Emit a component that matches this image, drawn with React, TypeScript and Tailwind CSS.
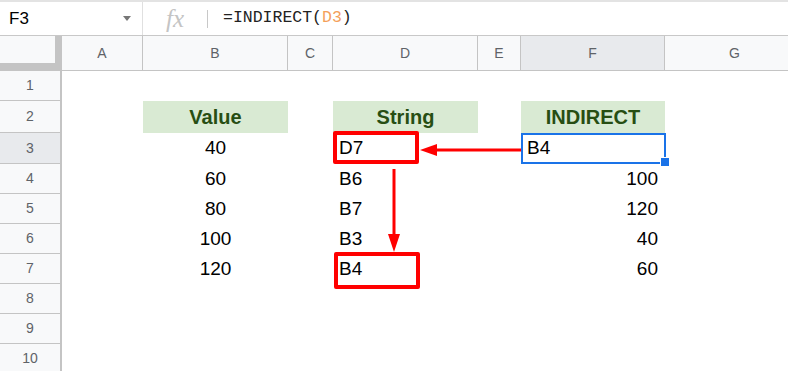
import React from 'react'

// column widths in px, row-number gutter first
const COLS = [
  { key: 'A', w: 81 },
  { key: 'B', w: 145 },
  { key: 'C', w: 45 },
  { key: 'D', w: 145 },
  { key: 'E', w: 43 },
  { key: 'F', w: 144 },
  { key: 'G', w: 140 },
]

const ROW_H = [30, 32, 31, 30, 30, 30, 30, 30, 30, 30]

type Cell = { text: string; align?: 'left' | 'center' | 'right'; head?: boolean }

const DATA: Record<number, Record<string, Cell>> = {
  2: {
    B: { text: 'Value', head: true },
    D: { text: 'String', head: true },
    F: { text: 'INDIRECT', head: true },
  },
  3: { B: { text: '40', align: 'center' }, D: { text: 'D7' }, F: { text: 'B4' } },
  4: { B: { text: '60', align: 'center' }, D: { text: 'B6' }, F: { text: '100', align: 'right' } },
  5: { B: { text: '80', align: 'center' }, D: { text: 'B7' }, F: { text: '120', align: 'right' } },
  6: { B: { text: '100', align: 'center' }, D: { text: 'B3' }, F: { text: '40', align: 'right' } },
  7: { B: { text: '120', align: 'center' }, D: { text: 'B4' }, F: { text: '60', align: 'right' } },
}

const font = { fontFamily: '"Liberation Sans", Arial, sans-serif' }

function FormulaBar() {
  return (
    <div className="flex h-[36px] border-t-2 border-b border-t-[#e3e3e3] border-b-[#c8c8c8] bg-white">
      <div className="flex w-[143px] items-center justify-between border-r border-[#e0e0e0] pl-[9px] pr-[11px]">
        <span className="text-[17px] text-black">F3</span>
        <svg width="8" height="5" viewBox="0 0 8 5">
          <path d="M0 0h8L4 5z" fill="#777" />
        </svg>
      </div>
      <div className="flex w-[64px] items-center justify-center">
        <span
          className="text-[25px] italic leading-none text-[#c4c4c4]"
          style={{ fontFamily: '"Liberation Serif", serif' }}
        >
          fx
        </span>
      </div>
      <div className="my-auto h-[18px] w-px bg-[#c8c8c8]" />
      <div
        className="flex items-center pl-[15px] text-[16.5px] text-[#222]"
        style={{ fontFamily: '"Liberation Mono", "DejaVu Sans Mono", monospace' }}
      >
        =INDIRECT(<span className="text-[#f4a05a]">D3</span>)
      </div>
    </div>
  )
}

function ColumnHeader() {
  return (
    <div className="flex h-[35px] border-b border-[#c4c4c4] bg-[#f8f9fa]">
      <div className="h-[34px] w-[62px] shrink-0 border-r-[7px] border-b-[7px] border-[#c4c4c4] bg-[#f8f9fa]" />
      {COLS.map((c) => (
        <div
          key={c.key}
          style={{ width: c.w }}
          className={`flex shrink-0 items-center justify-center border-r border-[#c4c4c4] text-[14px] text-[#5f6368] ${
            c.key === 'F' ? 'bg-[#e8eaed]' : ''
          }`}
        >
          {c.key}
        </div>
      ))}
    </div>
  )
}

function Row({ n, h }: { n: number; h: number }) {
  const cells = DATA[n] || {}
  return (
    <div className="flex" style={{ height: h }}>
      <div
        className={`flex w-[62px] shrink-0 items-center justify-center border-r-2 border-b border-[#c4c4c4] text-[14px] text-[#5f6368] ${
          n === 3 ? 'bg-[#e8eaed]' : 'bg-[#f8f9fa]'
        }`}
      >
        {n}
      </div>
      {COLS.map((c) => {
        const cell = cells[c.key]
        if (!cell) return <div key={c.key} style={{ width: c.w }} className="shrink-0" />
        if (cell.head) {
          return (
            <div
              key={c.key}
              style={{ width: c.w }}
              className="flex shrink-0 items-center justify-center bg-[#d9ead3] text-[20px] font-bold text-[#274e13]"
            >
              {cell.text}
            </div>
          )
        }
        const justify =
          cell.align === 'center' ? 'justify-center' : cell.align === 'right' ? 'justify-end pr-[7px]' : 'justify-start pl-[6px]'
        return (
          <div
            key={c.key}
            style={{ width: c.w }}
            className={`flex shrink-0 items-center text-[19px] text-black ${justify}`}
          >
            {cell.text}
          </div>
        )
      })}
    </div>
  )
}

export default function App() {
  return (
    <div className="relative h-[371px] w-[788px] overflow-hidden bg-white" style={font}>
      <FormulaBar />
      <ColumnHeader />
      {ROW_H.map((h, i) => (
        <Row key={i} n={i + 1} h={h} />
      ))}

      {/* selected cell F3 */}
      <div className="pointer-events-none absolute left-[521px] top-[133px] h-[31px] w-[145px] border-2 border-[#1a73e8]" />
      <div className="pointer-events-none absolute left-[660px] top-[157px] h-[10px] w-[10px] border border-white bg-[#1a73e8]" />

      {/* red callouts */}
      <div className="pointer-events-none absolute left-[333px] top-[131px] h-[33px] w-[86px] rounded-[2px] border-4 border-[#ff0000]" />
      <div className="pointer-events-none absolute left-[334px] top-[252px] h-[37px] w-[86px] rounded-[2px] border-4 border-[#ff0000]" />

      <svg className="pointer-events-none absolute left-0 top-0" width="788" height="371">
        <line x1="521" y1="150" x2="436" y2="150" stroke="#ff0000" strokeWidth="3" />
        <polygon points="420,150 437,144 437,156" fill="#ff0000" />
        <line x1="394" y1="169" x2="394" y2="236" stroke="#ff0000" strokeWidth="3" />
        <polygon points="388,234 400,234 394,252" fill="#ff0000" />
      </svg>
    </div>
  )
}
